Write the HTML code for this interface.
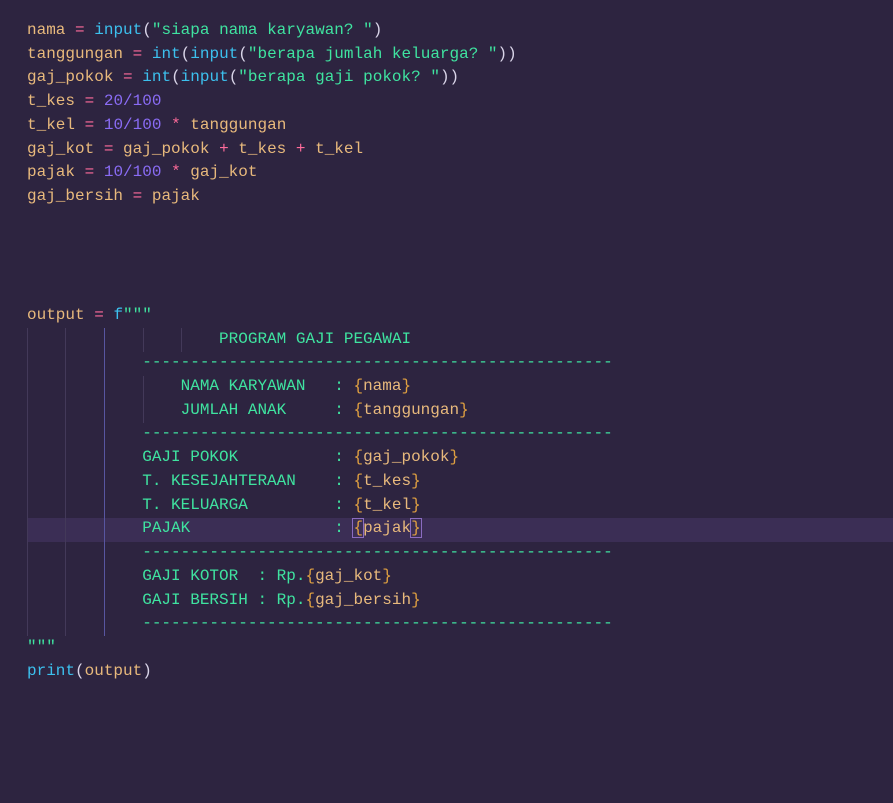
<!DOCTYPE html>
<html><head><style>
html,body{margin:0;padding:0;background:#2d2440;width:893px;height:803px;overflow:hidden}
.code{position:absolute;left:27px;top:19px;font-family:"Liberation Mono",monospace;font-size:16px;line-height:23.74px;white-space:pre;color:#e8b97c}
.hl{position:absolute;left:27px;right:0;top:517.5px;height:24px;background:#3b2e55}
.g{position:absolute;width:1px;background:#433959}
.v{color:#e8b97c}.o{color:#ff6b9b}.f{color:#3cc0ee}.s{color:#3fe3a0}.n{color:#8a6cf5}.p{color:#d9d4e8}.b{color:#e0a040}
.box{outline:1px solid #8a6cc0}
</style></head><body>
<div class="hl"></div>
<div class="g" style="left:27px;top:328px;height:308px"></div>
<div class="g" style="left:65px;top:328px;height:308px"></div>
<div class="g" style="left:104px;top:328px;height:308px;background:#5856a0"></div>
<div class="g" style="left:143px;top:328px;height:24px"></div>
<div class="g" style="left:181px;top:328px;height:24px"></div>
<div class="g" style="left:143px;top:376px;height:47px"></div>
<div class="code"><span class="v">nama</span> <span class="o">=</span> <span class="f">input</span><span class="p">(</span><span class="s">"siapa nama karyawan? "</span><span class="p">)</span>
<span class="v">tanggungan</span> <span class="o">=</span> <span class="f">int</span><span class="p">(</span><span class="f">input</span><span class="p">(</span><span class="s">"berapa jumlah keluarga? "</span><span class="p">))</span>
<span class="v">gaj_pokok</span> <span class="o">=</span> <span class="f">int</span><span class="p">(</span><span class="f">input</span><span class="p">(</span><span class="s">"berapa gaji pokok? "</span><span class="p">))</span>
<span class="v">t_kes</span> <span class="o">=</span> <span class="n">20/100</span>
<span class="v">t_kel</span> <span class="o">=</span> <span class="n">10/100</span> <span class="o">*</span> tanggungan
<span class="v">gaj_kot</span> <span class="o">=</span> gaj_pokok <span class="o">+</span> t_kes <span class="o">+</span> t_kel
<span class="v">pajak</span> <span class="o">=</span> <span class="n">10/100</span> <span class="o">*</span> gaj_kot
<span class="v">gaj_bersih</span> <span class="o">=</span> pajak




<span class="v">output</span> <span class="o">=</span> <span class="f">f</span><span class="s">"""</span>
<span class="s">                    PROGRAM GAJI PEGAWAI</span>
<span class="s">            -------------------------------------------------</span>
<span class="s">                NAMA KARYAWAN   : </span><span class="b">{</span>nama<span class="b">}</span>
<span class="s">                JUMLAH ANAK     : </span><span class="b">{</span>tanggungan<span class="b">}</span>
<span class="s">            -------------------------------------------------</span>
<span class="s">            GAJI POKOK          : </span><span class="b">{</span>gaj_pokok<span class="b">}</span>
<span class="s">            T. KESEJAHTERAAN    : </span><span class="b">{</span>t_kes<span class="b">}</span>
<span class="s">            T. KELUARGA         : </span><span class="b">{</span>t_kel<span class="b">}</span>
<span class="s">            PAJAK               : </span><span class="b box">{</span>pajak<span class="b box">}</span>
<span class="s">            -------------------------------------------------</span>
<span class="s">            GAJI KOTOR  : Rp.</span><span class="b">{</span>gaj_kot<span class="b">}</span>
<span class="s">            GAJI BERSIH : Rp.</span><span class="b">{</span>gaj_bersih<span class="b">}</span>
<span class="s">            -------------------------------------------------</span>
<span class="s">"""</span>
<span class="f">print</span><span class="p">(</span>output<span class="p">)</span></div>
</body></html>
